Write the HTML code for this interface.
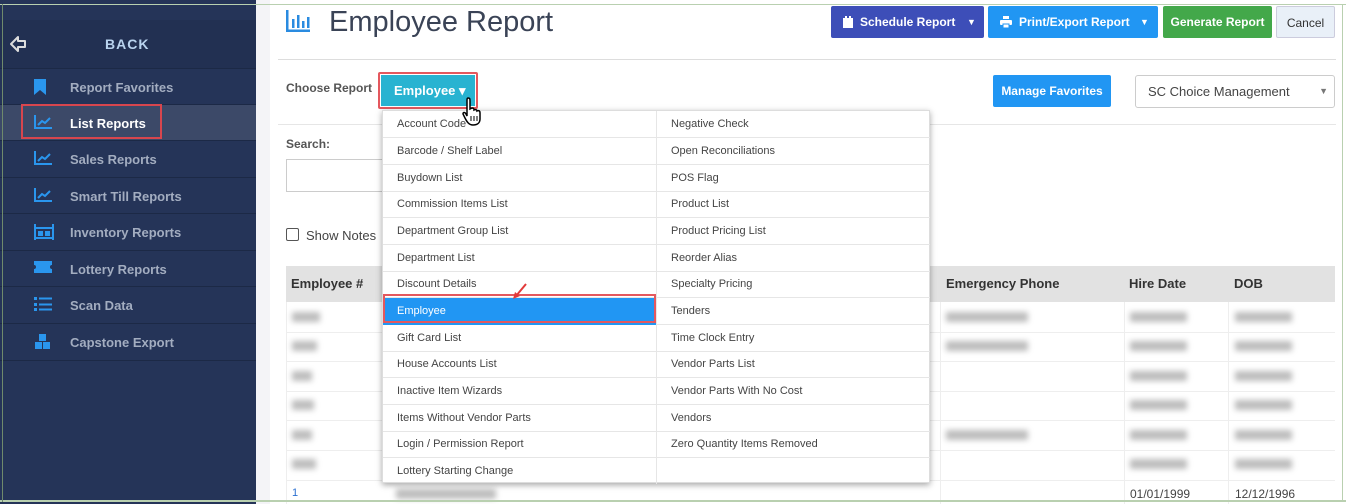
<!DOCTYPE html>
<html><head><meta charset="utf-8"><style>
*{box-sizing:border-box;margin:0;padding:0}
body{width:1346px;height:504px;overflow:hidden;font-family:"Liberation Sans",sans-serif;background:#f4f4f7;position:relative}
.abs{position:absolute}
#side{left:0;top:0;width:256px;height:504px;background:#253458}
.row{position:absolute;left:0;width:256px;border-bottom:1px solid #1c2946;color:#a3adc0;font-size:13px;font-weight:bold}
.row span{position:absolute;left:70px;top:11px}
.row svg{position:absolute;left:34px;top:10px}
#main{left:270px;top:0;width:1076px;height:504px;background:#fff}
.btn{position:absolute;top:6px;height:32px;color:#fff;font-size:12px;font-weight:bold;border-radius:2px;line-height:32px;text-align:center}
.dd{position:absolute;left:382px;top:110px;width:548px;height:373px;background:#fff;box-shadow:0 2px 6px rgba(0,0,0,.35);border:1px solid #ddd}
.it{position:absolute;height:27px;border-bottom:1px solid #e6e6e6;font-size:11px;color:#444;line-height:26px;padding-left:14px;width:273px}
.bl{position:absolute;height:10px;background:#888;filter:blur(3px);opacity:.55}
.th{position:absolute;top:276px;font-size:13px;font-weight:bold;color:#333}
</style></head><body>
<div id="side" class="abs">
 <div class="row" style="top:20px;height:49px;background:#223052"><svg style="left:9px;top:15px" width="18" height="18" viewBox="0 0 18 18"><path d="M2 9 L9 2 V6 H16 V12 H9 V16 Z" fill="none" stroke="#ddd" stroke-width="2" stroke-linejoin="round"/></svg><span style="left:105px;top:16px;color:#b9d3ee;font-size:14px;letter-spacing:1px">BACK</span></div>
 <div class="row" style="top:69px;height:36px"><svg width="12" height="16"><path d="M0 0H12V16L6 11 0 16Z" fill="#2a96ee"/></svg><span>Report Favorites</span></div>
 <div class="row" style="top:105px;height:36px;background:#3c4968"><svg width="18" height="14"><path d="M1 0V13H18" stroke="#2a96ee" stroke-width="2" fill="none"/><path d="M4 10L8 6 11 8 16 3" stroke="#2a96ee" stroke-width="2" fill="none"/></svg><span style="color:#fff">List Reports</span></div>
 <div class="abs" style="left:21px;top:104px;width:141px;height:35px;border:2px solid #d8464e"></div>
 <div class="row" style="top:141px;height:37px"><svg width="18" height="14"><path d="M1 0V13H18" stroke="#2a96ee" stroke-width="2" fill="none"/><path d="M4 10L8 6 11 8 16 3" stroke="#2a96ee" stroke-width="2" fill="none"/></svg><span>Sales Reports</span></div>
 <div class="row" style="top:178px;height:36px"><svg width="18" height="14"><path d="M1 0V13H18" stroke="#2a96ee" stroke-width="2" fill="none"/><path d="M4 10L8 6 11 8 16 3" stroke="#2a96ee" stroke-width="2" fill="none"/></svg><span>Smart Till Reports</span></div>
 <div class="row" style="top:214px;height:37px"><svg width="20" height="16"><path d="M1 0V16M19 0V16M1 14H19M1 4H19" stroke="#2a96ee" stroke-width="2" fill="none"/><rect x="4" y="7" width="5" height="5" fill="#2a96ee"/><rect x="11" y="7" width="5" height="5" fill="#2a96ee"/></svg><span>Inventory Reports</span></div>
 <div class="row" style="top:251px;height:36px"><svg width="18" height="12"><path d="M0 0H18V4A2 2 0 0 0 18 8V12H0V8A2 2 0 0 0 0 4Z" fill="#2a96ee"/></svg><span>Lottery Reports</span></div>
 <div class="row" style="top:287px;height:37px"><svg width="18" height="14"><g fill="#2a96ee"><rect x="0" y="0" width="3" height="3"/><rect x="0" y="6" width="3" height="3"/><rect x="0" y="11" width="3" height="3"/><rect x="5" y="0.5" width="13" height="2"/><rect x="5" y="6.5" width="13" height="2"/><rect x="5" y="11.5" width="13" height="2"/></g></svg><span>Scan Data</span></div>
 <div class="row" style="top:324px;height:37px"><svg width="18" height="16"><g fill="#2a96ee"><rect x="5" y="0" width="7" height="7"/><rect x="1" y="8" width="7" height="7"/><rect x="9" y="8" width="7" height="7"/></g></svg><span>Capstone Export</span></div>
</div>
<div id="main" class="abs"></div>
<svg class="abs" style="left:286px;top:10px" width="24" height="22"><g fill="#2a8be0"><rect x="0" y="0" width="2.5" height="22"/><rect x="0" y="19.5" width="24" height="2.5"/><rect x="6" y="9" width="2.5" height="9"/><rect x="11" y="5" width="2.5" height="13"/><rect x="16" y="11" width="2.5" height="7"/><rect x="21" y="7" width="2.5" height="11"/></g></svg>
<div class="abs" style="left:329px;top:6px;font-size:29px;color:#3a4356">Employee Report</div>
<div class="btn" style="left:831px;width:153px;background:#3d4eb8;text-align:left;padding-left:29px">Schedule Report<span style="position:absolute;left:136px;font-size:9px">▼</span><svg style="position:absolute;left:12px;top:10px" width="10" height="12"><rect x="0" y="2" width="10" height="10" fill="#fff"/><rect x="2" y="0" width="2" height="3" fill="#fff"/><rect x="6" y="0" width="2" height="3" fill="#fff"/></svg></div>
<div class="btn" style="left:988px;width:170px;background:#2196f3;text-align:left;padding-left:31px">Print/Export Report<span style="position:absolute;left:152px;font-size:9px">▼</span><svg style="position:absolute;left:12px;top:10px" width="12" height="12"><rect x="3" y="0" width="6" height="3" fill="#fff"/><rect x="0" y="4" width="12" height="5" rx="1" fill="#fff"/><rect x="3" y="8" width="6" height="4" fill="#fff" stroke="#2196f3"/></svg></div>
<div class="btn" style="left:1163px;width:109px;background:#43a84a">Generate Report</div>
<div class="btn" style="left:1276px;width:59px;background:#e9f0f8;color:#333;font-weight:normal;border:1px solid #ccd">Cancel</div>
<div class="abs" style="left:278px;top:59px;width:1058px;height:1px;background:#ddd"></div>
<div class="abs" style="left:278px;top:124px;width:1058px;height:1px;background:#e6e6e6"></div>
<div class="abs" style="left:286px;top:81px;font-size:12px;font-weight:bold;color:#555">Choose Report</div>
<div class="abs" style="left:378px;top:72px;width:100px;height:37px;border:2px solid #e4585e;border-radius:2px"></div>
<div class="abs" style="left:381px;top:75px;width:94px;height:31px;background:#28b3d1;color:#fff;font-size:13px;font-weight:bold;line-height:31px;padding-left:13px">Employee ▾</div>
<div class="abs" style="left:993px;top:75px;width:118px;height:32px;background:#2196f3;color:#fff;font-size:12px;font-weight:bold;line-height:32px;text-align:center;border-radius:2px">Manage Favorites</div>
<div class="abs" style="left:1135px;top:75px;width:200px;height:33px;border:1px solid #ccc;border-radius:3px;font-size:13px;color:#444;line-height:31px;padding-left:12px">SC Choice Management<span style="position:absolute;right:6px;font-size:9px;color:#777">▼</span></div>
<div class="abs" style="left:286px;top:137px;font-size:12px;font-weight:bold;color:#555">Search:</div>
<div class="abs" style="left:286px;top:159px;width:120px;height:33px;border:1px solid #ccc"></div>
<div class="abs" style="left:286px;top:228px;width:13px;height:13px;border:1px solid #555;border-radius:2px"></div>
<div class="abs" style="left:306px;top:228px;font-size:13px;color:#444">Show Notes</div>
<div class="abs" style="left:286px;top:266px;width:1049px;height:36px;background:#e2e2e2"></div>
<div class="th" style="left:291px">Employee #</div>
<div class="th" style="left:946px">Emergency Phone</div>
<div class="th" style="left:1129px">Hire Date</div>
<div class="th" style="left:1234px">DOB</div>
<div class="abs" style="left:286px;top:302px;width:1049px;height:202px;border-left:1px solid #eee"></div>
<div class="abs" style="left:286px;top:332px;width:1049px;height:1px;background:#eee"></div>
<div class="abs" style="left:286px;top:361px;width:1049px;height:1px;background:#eee"></div>
<div class="abs" style="left:286px;top:391px;width:1049px;height:1px;background:#eee"></div>
<div class="abs" style="left:286px;top:420px;width:1049px;height:1px;background:#eee"></div>
<div class="abs" style="left:286px;top:450px;width:1049px;height:1px;background:#eee"></div>
<div class="abs" style="left:286px;top:480px;width:1049px;height:1px;background:#eee"></div>
<div class="abs" style="left:940px;top:302px;width:1px;height:202px;background:#eee"></div>
<div class="abs" style="left:1124px;top:302px;width:1px;height:202px;background:#eee"></div>
<div class="abs" style="left:1228px;top:302px;width:1px;height:202px;background:#eee"></div>
<div class="bl" style="left:292px;top:312px;width:28px"></div><div class="bl" style="left:946px;top:312px;width:82px"></div><div class="bl" style="left:1130px;top:312px;width:57px"></div><div class="bl" style="left:1235px;top:312px;width:57px"></div>
<div class="bl" style="left:292px;top:341px;width:25px"></div><div class="bl" style="left:946px;top:341px;width:82px"></div><div class="bl" style="left:1130px;top:341px;width:57px"></div><div class="bl" style="left:1235px;top:341px;width:57px"></div>
<div class="bl" style="left:292px;top:371px;width:20px"></div><div class="bl" style="left:1130px;top:371px;width:57px"></div><div class="bl" style="left:1235px;top:371px;width:57px"></div>
<div class="bl" style="left:292px;top:400px;width:22px"></div><div class="bl" style="left:1130px;top:400px;width:57px"></div><div class="bl" style="left:1235px;top:400px;width:57px"></div>
<div class="bl" style="left:292px;top:430px;width:20px"></div><div class="bl" style="left:946px;top:430px;width:82px"></div><div class="bl" style="left:1130px;top:430px;width:57px"></div><div class="bl" style="left:1235px;top:430px;width:57px"></div>
<div class="bl" style="left:292px;top:459px;width:24px"></div><div class="bl" style="left:1130px;top:459px;width:57px"></div><div class="bl" style="left:1235px;top:459px;width:57px"></div>
<div class="abs" style="left:292px;top:487px;font-size:11px;color:#2a6fd0">1</div><div class="abs" style="left:1130px;top:487px;font-size:12px;color:#444">01/01/1999</div><div class="abs" style="left:1235px;top:487px;font-size:12px;color:#444">12/12/1996</div>
<div class="bl" style="left:396px;top:489px;width:100px"></div>
<div class="dd">
 <div class="it" style="left:0;top:0">Account Code</div><div class="it" style="left:0;top:27px">Barcode / Shelf Label</div><div class="it" style="left:0;top:54px">Buydown List</div><div class="it" style="left:0;top:80px">Commission Items List</div><div class="it" style="left:0;top:107px">Department Group List</div><div class="it" style="left:0;top:134px">Department List</div><div class="it" style="left:0;top:160px">Discount Details</div>
 <div class="it" style="left:0;top:187px;background:#2196f3;color:#fff;border:none">Employee</div>
 <div class="it" style="left:0;top:214px">Gift Card List</div><div class="it" style="left:0;top:240px">House Accounts List</div><div class="it" style="left:0;top:267px">Inactive Item Wizards</div><div class="it" style="left:0;top:294px">Items Without Vendor Parts</div><div class="it" style="left:0;top:320px">Login / Permission Report</div><div class="it" style="left:0;top:347px;border:none">Lottery Starting Change</div>
 <div style="position:absolute;left:273px;top:0;width:1px;height:373px;background:#e6e6e6"></div>
 <div class="it" style="left:274px;top:0">Negative Check</div><div class="it" style="left:274px;top:27px">Open Reconciliations</div><div class="it" style="left:274px;top:54px">POS Flag</div><div class="it" style="left:274px;top:80px">Product List</div><div class="it" style="left:274px;top:107px">Product Pricing List</div><div class="it" style="left:274px;top:134px">Reorder Alias</div><div class="it" style="left:274px;top:160px">Specialty Pricing</div><div class="it" style="left:274px;top:187px">Tenders</div><div class="it" style="left:274px;top:214px">Time Clock Entry</div><div class="it" style="left:274px;top:240px">Vendor Parts List</div><div class="it" style="left:274px;top:267px">Vendor Parts With No Cost</div><div class="it" style="left:274px;top:294px">Vendors</div><div class="it" style="left:274px;top:320px">Zero Quantity Items Removed</div>
</div>
<div class="abs" style="left:383px;top:294px;width:273px;height:29px;border:2px solid #e4585e"></div>
<svg class="abs" style="left:510px;top:282px" width="20" height="20"><path d="M16 2 L6 14" stroke="#e23a3a" stroke-width="2"/><path d="M3 17 L5 10 L10 14Z" fill="#e23a3a"/></svg>
<svg class="abs" style="left:461px;top:96px" width="28" height="32"><path d="M7 2C9 2 9 3 9 5V13L11 12C13 12 13 13 13 14C15 13 16 14 16 15C18 14 19 15 19 17V23C19 27 16 29 12 29C8 29 6 26 4 22L2 18C2 16 4 16 5 18L6 20V5C6 3 6 2 7 2Z" fill="#fff" stroke="#000" stroke-width="1.5"/><path d="M10 20V25M13 20V25M16 20V25" stroke="#000" stroke-width="1"/></svg>
<div class="abs" style="left:0;top:4px;width:1346px;height:1px;background:#b9d0b0"></div>
<div class="abs" style="left:0;top:500px;width:1346px;height:2px;background:#b9d0b0"></div>
<div class="abs" style="left:2px;top:4px;width:1px;height:498px;background:#6f8a6c"></div>
<div class="abs" style="left:1342px;top:4px;width:1px;height:498px;background:#b9d0b0"></div>
</body></html>
